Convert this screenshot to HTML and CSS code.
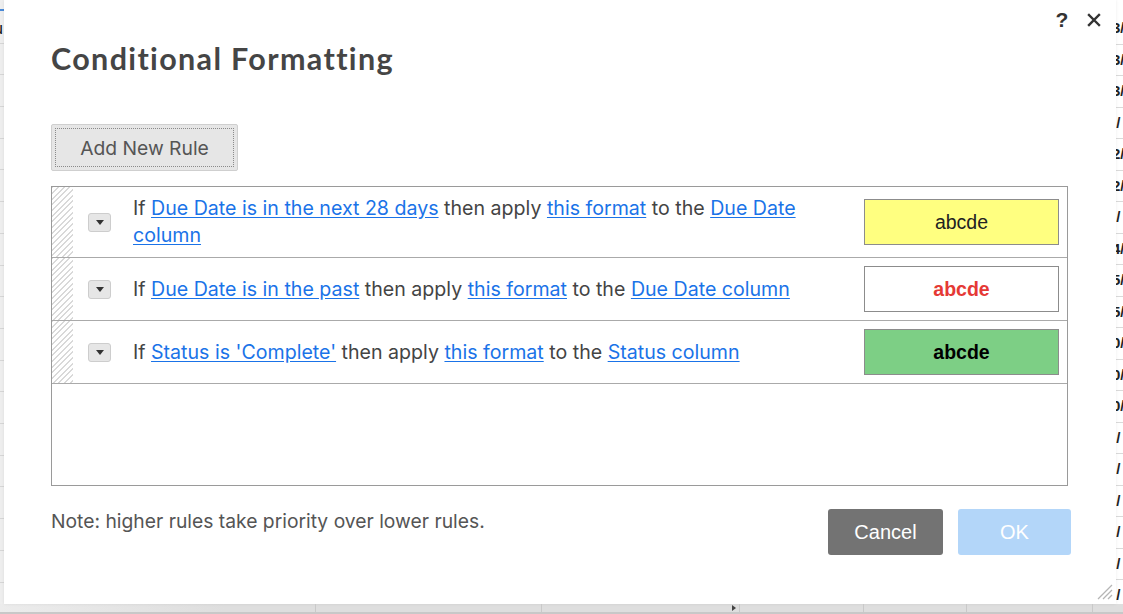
FILE: index.html
```html
<!DOCTYPE html>
<html lang="en">
<head>
<meta charset="utf-8">
<title>Conditional Formatting</title>
<link rel="stylesheet" href="styles.css">
</head>
<body>
<div class="screen">
  <div class="stage">
    <div class="left-strip">
      <span class="tab-mark"></span>
      <span class="left-char">u</span>
    </div>

    <div class="dialog" role="dialog" aria-label="Conditional Formatting">
      <div class="dialog-top">
        <button class="icon-btn help" aria-label="Help">?</button>
        <button class="icon-btn close" aria-label="Close">
          <svg width="14" height="14" viewBox="0 0 14 14"><path d="M2 2 L12 12 M12 2 L2 12" stroke="#333" stroke-width="2.4" stroke-linecap="square"/></svg>
        </button>
      </div>
      <div class="dialog-body">
        <h1 class="title">Conditional Formatting</h1>

        <button class="add-rule"><span class="focus-ring">Add New Rule</span></button>

        <div class="rule-list">
          <div class="rule">
            <div class="hatch"></div>
            <div class="rule-main">
              <button class="dd" aria-label="Rule menu"><span class="tri"></span></button>
              <p class="rule-text">If <a href="#">Due Date is in the next 28 days</a> then apply <a href="#">this format</a> to the <a href="#">Due Date column</a></p>
              <div class="preview yellow">abcde</div>
            </div>
          </div>
          <div class="rule">
            <div class="hatch"></div>
            <div class="rule-main">
              <button class="dd" aria-label="Rule menu"><span class="tri"></span></button>
              <p class="rule-text">If <a href="#">Due Date is in the past</a> then apply <a href="#">this format</a> to the <a href="#">Due Date column</a></p>
              <div class="preview white">abcde</div>
            </div>
          </div>
          <div class="rule">
            <div class="hatch"></div>
            <div class="rule-main">
              <button class="dd" aria-label="Rule menu"><span class="tri"></span></button>
              <p class="rule-text">If <a href="#">Status is 'Complete'</a> then apply <a href="#">this format</a> to the <a href="#">Status column</a></p>
              <div class="preview green">abcde</div>
            </div>
          </div>
        </div>

        <div class="footer">
          <p class="note">Note: higher rules take priority over lower rules.</p>
          <div class="actions">
            <button class="btn cancel">Cancel</button>
            <button class="btn ok">OK</button>
          </div>
        </div>
      </div>
      <svg class="grip" width="18" height="18" viewBox="0 0 18 18">
        <path d="M17 3 L3 17 M17 8 L8 17 M17 13 L13 17" stroke="#b5b5b5" stroke-width="1.3"/>
      </svg>
    </div>

    <div class="right-strip">
      <div class="cell">3/</div>
      <div class="cell">3/</div>
      <div class="cell">3/</div>
      <div class="cell">&nbsp;/</div>
      <div class="cell">2/</div>
      <div class="cell">2/</div>
      <div class="cell">&nbsp;/</div>
      <div class="cell">4/</div>
      <div class="cell">5/</div>
      <div class="cell">5/</div>
      <div class="cell">0/</div>
      <div class="cell">0/</div>
      <div class="cell">0/</div>
      <div class="cell">&nbsp;/</div>
      <div class="cell">&nbsp;/</div>
      <div class="cell">&nbsp;/</div>
      <div class="cell">&nbsp;/</div>
      <div class="cell">&nbsp;/</div>
      <div class="cell">&nbsp;/</div>
      <div class="cell">&nbsp;/</div>
    </div>
  </div>

  <div class="bottom-bar">
    <div class="bcell w1"></div>
    <div class="bcell w2"></div>
    <div class="bcell w3"><span class="arrow"></span></div>
    <div class="bcell w4"></div>
    <div class="bcell w5"></div>
    <div class="bcell w6"></div>
    <div class="bcell w7"></div>
  </div>
</div>
</body>
</html>
```

FILE: styles.css
```css
* { box-sizing: border-box; }

html, body {
  margin: 0;
  padding: 0;
}

body {
  width: 1123px;
  height: 614px;
  overflow: hidden;
  background: #e4e4e4;
  font-family: "Inter", "Liberation Sans", sans-serif;
}

.screen {
  display: flex;
  flex-direction: column;
  width: 1123px;
  height: 614px;
}

.stage {
  display: flex;
  height: 604px;
}

/* background spreadsheet, left edge */
.left-strip {
  position: relative;
  width: 4px;
  flex: none;
  overflow: hidden;
  background-color: #eeeeee;
  background-image: repeating-linear-gradient(to bottom, transparent 0 30.7px, #d6d6d6 30.7px 31.7px);
  background-position: 0 12px;
}
.tab-mark {
  position: absolute;
  left: 0;
  top: 9px;
  width: 4px;
  height: 2px;
  background: #4a8ad8;
}
.left-char {
  position: absolute;
  left: -6px;
  top: 20px;
  font: 16px "Liberation Sans", sans-serif;
  color: #111;
}

/* dialog */
.dialog {
  position: relative;
  width: 1112px;
  flex: none;
  background: #fff;
  display: flex;
  flex-direction: column;
  box-shadow: 0 0 3px rgba(0,0,0,0.08);
}

.dialog-top {
  height: 40px;
  display: flex;
  justify-content: flex-end;
  align-items: center;
  gap: 17px;
  padding: 0 14px 0 0;
}

.icon-btn {
  border: 0;
  background: none;
  padding: 0;
  color: #333;
  cursor: pointer;
  display: flex;
  align-items: center;
  justify-content: center;
}
.help {
  font: bold 21px "Liberation Sans", sans-serif;
  width: 14px;
  height: 24px;
}
.close {
  width: 16px;
  height: 24px;
}

.dialog-body {
  padding: 0 48px 0 47px;
  display: flex;
  flex-direction: column;
}

.title {
  margin: 0;
  font-family: "Lato", sans-serif;
  font-weight: 700;
  font-size: 30.5px;
  line-height: 36px;
  color: #454545;
  letter-spacing: 1.35px;
}

.add-rule {
  margin-top: 48px;
  align-self: flex-start;
  width: 187px;
  height: 47px;
  padding: 3px;
  background: #e6e6e6;
  border: 1px solid #cfcfcf;
  border-radius: 2px;
  cursor: pointer;
}
.focus-ring {
  display: flex;
  align-items: center;
  justify-content: center;
  height: 100%;
  border: 1px dotted #8a8a8a;
  font-family: "Inter", sans-serif;
  font-size: 19.3px;
  color: #555;
}

.rule-list {
  margin-top: 15px;
  height: 300px;
  border: 1px solid #9a9a9a;
  display: flex;
  flex-direction: column;
}

.rule {
  display: flex;
  min-height: 63px;
  border-bottom: 1px solid #aaa;
}
.rule:first-child { min-height: 71px; }

.hatch {
  width: 21px;
  flex: none;
  background: repeating-linear-gradient(135deg, #d9d9d9 0 1.4px, #fff 1.4px 4px);
}

.rule-main {
  flex: 1;
  display: flex;
  align-items: center;
  padding: 8px 8px 8px 15px;
}

.dd {
  width: 23px;
  height: 19px;
  flex: none;
  border: 1px solid #cdcdcd;
  border-radius: 3px;
  background: #e6e6e6;
  padding: 0;
  display: flex;
  align-items: center;
  justify-content: center;
  cursor: pointer;
}
.tri {
  width: 0;
  height: 0;
  border-left: 4.5px solid transparent;
  border-right: 4.5px solid transparent;
  border-top: 5px solid #333;
}

.rule-text {
  flex: 1;
  margin: 0 16px 0 22px;
  font-size: 19.6px;
  line-height: 27px;
  color: #444;
}
.rule-text a {
  color: #1a73e8;
  text-decoration: underline;
  text-underline-offset: 2px;
}

.preview {
  width: 195px;
  height: 46px;
  flex: none;
  border: 1px solid #8c8c8c;
  display: flex;
  align-items: center;
  justify-content: center;
  font-family: "Liberation Sans", Arial, sans-serif;
  font-size: 19.5px;
}
.preview.yellow { background: #ffff80; color: #222; }
.preview.white { background: #fff; color: #e53935; font-weight: 700; }
.preview.green { background: #7dcf85; color: #000; font-weight: 700; }

.footer {
  margin-top: 23px;
  margin-right: -3px;
  display: flex;
  justify-content: space-between;
  align-items: flex-start;
}
.note {
  margin: 0;
  font-size: 19.3px;
  line-height: 24px;
  color: #555;
}
.actions {
  display: flex;
  gap: 15px;
}
.btn {
  height: 46px;
  border: 0;
  border-radius: 3px;
  font-family: "Liberation Sans", Arial, sans-serif;
  font-size: 20px;
  color: #fff;
  cursor: pointer;
}
.cancel { width: 115px; background: #737373; }
.ok { width: 113px; background: #b3d6f9; }

.grip {
  position: absolute;
  right: 3px;
  bottom: 4px;
}

/* background spreadsheet, right edge */
.right-strip {
  flex: 1;
  overflow: hidden;
  background: #fff;
  padding-top: 13px;
}
.right-strip .cell {
  height: 31.5px;
  border-bottom: 1px solid #dadada;
  font: bold 15px "Liberation Sans", sans-serif;
  line-height: 30px;
  color: #222;
  margin-left: -4px;
  white-space: nowrap;
}

.bottom-bar {
  height: 10px;
  display: flex;
  background: linear-gradient(to right, #ececec, #dedede 20%, #dedede);
  border-bottom: 2px solid #c8c8c8;
}
.bcell {
  height: 100%;
  border-right: 1px solid #c9c9c9;
  position: relative;
}
.w1 { width: 316px; }
.w2 { width: 226px; }
.w3 { width: 198px; }
.w4 { width: 124px; }
.w5 { width: 103px; }
.w6 { width: 126px; }
.w7 { flex: 1; border-right: 0; }
.arrow {
  position: absolute;
  right: 3px;
  top: 1px;
  width: 0;
  height: 0;
  border-top: 3px solid transparent;
  border-bottom: 3px solid transparent;
  border-left: 4px solid #444;
}
```
